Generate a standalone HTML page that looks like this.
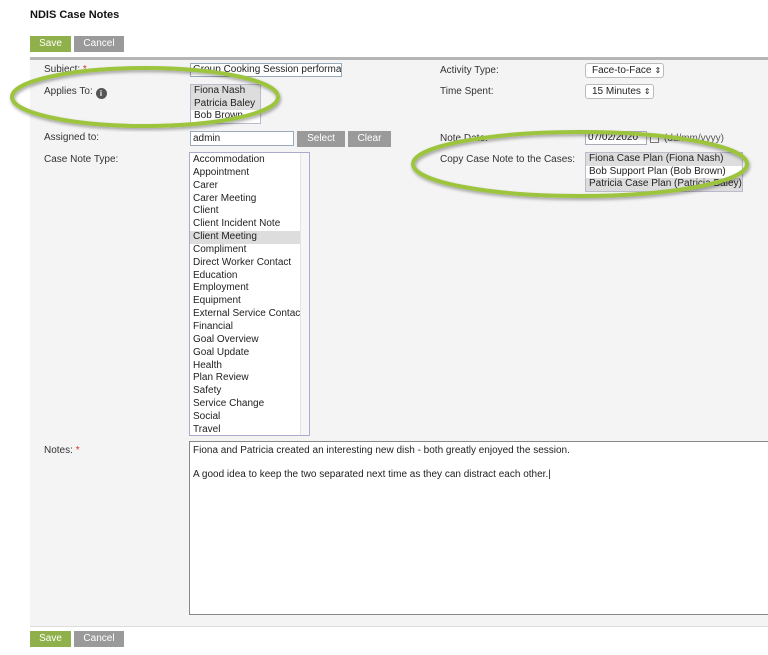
<!DOCTYPE html>
<html><head><style>
*{margin:0;padding:0;box-sizing:border-box}
body{width:768px;height:655px;background:#fff;font-family:"Liberation Sans",sans-serif;font-size:10px;color:#222;position:relative;overflow:hidden}
.a{position:absolute;white-space:nowrap}
.btn{position:absolute;height:16px;color:#fff;font-size:10px;text-align:center;line-height:16px}
.g{background:#8fb04a}.gr{background:#9a9a9a}
.lbl{position:absolute;color:#333;font-size:10px;white-space:nowrap}
.req{color:#c33}
.box{position:absolute;background:#fff;border:1px solid #aab;white-space:nowrap;overflow:hidden}
.sel{background:#ddd}
.li{height:12.85px;line-height:12.85px;padding-left:3px;white-space:nowrap}
.arr{font-size:8px;margin-left:3px}
</style></head><body>
<div class="a" style="left:30px;top:9px;font-weight:bold;font-size:11px;color:#111">NDIS Case Notes</div>
<div class="btn g" style="left:30px;top:36px;width:41px">Save</div>
<div class="btn gr" style="left:74px;top:36px;width:50px">Cancel</div>
<div class="a" style="left:30px;top:57px;width:738px;height:570px;background:#f4f4f4;border-top:3px solid #b5b5b5;border-bottom:1px solid #ddd"></div>

<div class="lbl" style="left:44px;top:64px">Subject: <span class="req">*</span></div>
<div class="box" style="left:190px;top:63px;width:152px;height:14px;padding-left:2px;line-height:12px;border-color:#9ab">Group Cooking Session performance</div>
<div class="lbl" style="left:44px;top:86px">Applies To: <span style="display:inline-block;width:11px;height:11px;border-radius:50%;background:#555;color:#fff;font-size:8px;text-align:center;line-height:11px;font-weight:bold;vertical-align:-2px">i</span></div>
<div class="box" style="left:190px;top:84px;width:71px;height:40px;border-color:#bbc">
<div class="li sel" style="height:12.5px;line-height:12.5px">Fiona Nash</div><div class="li sel" style="height:12.5px;line-height:12.5px">Patricia Baley</div><div class="li" style="height:12.5px;line-height:12.5px">Bob Brown</div></div>

<div class="lbl" style="left:44px;top:132px">Assigned to:</div>
<div class="box" style="left:190px;top:131px;width:104px;height:15px;padding-left:2px;line-height:13px;border-color:#9ab">admin</div>
<div class="btn gr" style="left:297px;top:131px;width:48px">Select</div>
<div class="btn gr" style="left:348px;top:131px;width:43px">Clear</div>

<div class="lbl" style="left:44px;top:154px">Case Note Type:</div>
<div class="box" style="left:189px;top:152px;width:121px;height:284px;border-color:#aac;padding-top:1px">
<div style="position:absolute;right:0;top:0;width:9px;height:282px;background:#f6f6f6;border-left:1px solid #e4e4e4"></div>
<div class="li">Accommodation</div><div class="li">Appointment</div><div class="li">Carer</div><div class="li">Carer Meeting</div><div class="li">Client</div><div class="li">Client Incident Note</div><div class="li sel" style="margin-right:9px">Client Meeting</div><div class="li">Compliment</div><div class="li">Direct Worker Contact</div><div class="li">Education</div><div class="li">Employment</div><div class="li">Equipment</div><div class="li">External Service Contact</div><div class="li">Financial</div><div class="li">Goal Overview</div><div class="li">Goal Update</div><div class="li">Health</div><div class="li">Plan Review</div><div class="li">Safety</div><div class="li">Service Change</div><div class="li">Social</div><div class="li">Travel</div>
</div>

<div class="lbl" style="left:440px;top:65px">Activity Type:</div>
<div class="box" style="left:585px;top:63px;width:79px;height:15px;border-radius:3px;border-color:#bbb;padding-left:6px;line-height:13px">Face-to-Face<span class="arr">⇕</span></div>
<div class="lbl" style="left:440px;top:86px">Time Spent:</div>
<div class="box" style="left:585px;top:84px;width:69px;height:15px;border-radius:3px;border-color:#bbb;padding-left:6px;line-height:13px">15 Minutes<span class="arr">⇕</span></div>
<div class="lbl" style="left:440px;top:133px">Note Date:</div>
<div class="box" style="left:585px;top:131px;width:62px;height:14px;padding-left:2px;line-height:12px">07/02/2020</div>
<div class="a" style="left:650px;top:134px;width:9px;height:9px;border:1px solid #777;background:#fff"></div>
<div class="lbl" style="left:664px;top:133px;color:#555">(dd/mm/yyyy)</div>
<div class="lbl" style="left:440px;top:154px">Copy Case Note to the Cases:</div>
<div class="box" style="left:585px;top:152px;width:158px;height:40px;border-color:#bbc">
<div class="li sel" style="height:12.7px;line-height:12.7px">Fiona Case Plan (Fiona Nash)</div><div class="li" style="height:12.7px;line-height:12.7px">Bob Support Plan (Bob Brown)</div><div class="li sel" style="height:12.7px;line-height:12.7px">Patricia Case Plan (Patricia Baley)</div></div>

<div class="lbl" style="left:44px;top:445px">Notes: <span class="req">*</span></div>
<div class="box" style="left:189px;top:441px;width:590px;height:174px;border:1px solid #888;padding:3px 3px;line-height:12px">Fiona and Patricia created an interesting new dish - both greatly enjoyed the session.<br><br>A good idea to keep the two separated next time as they can distract each other.|</div>

<div class="btn g" style="left:30px;top:631px;width:41px">Save</div>
<div class="btn gr" style="left:74px;top:631px;width:50px">Cancel</div>

<svg class="a" style="left:0;top:0" width="768" height="655">
<defs><filter id="s"><feDropShadow dx="1" dy="2" stdDeviation="1.5" flood-color="#000" flood-opacity="0.35"/></filter></defs>
<ellipse cx="145" cy="97" rx="133" ry="29" fill="none" stroke="#9cc43e" stroke-width="4" filter="url(#s)"/>
<ellipse cx="580" cy="164" rx="167" ry="32" fill="none" stroke="#9cc43e" stroke-width="4" filter="url(#s)"/>
</svg>
</body></html>
